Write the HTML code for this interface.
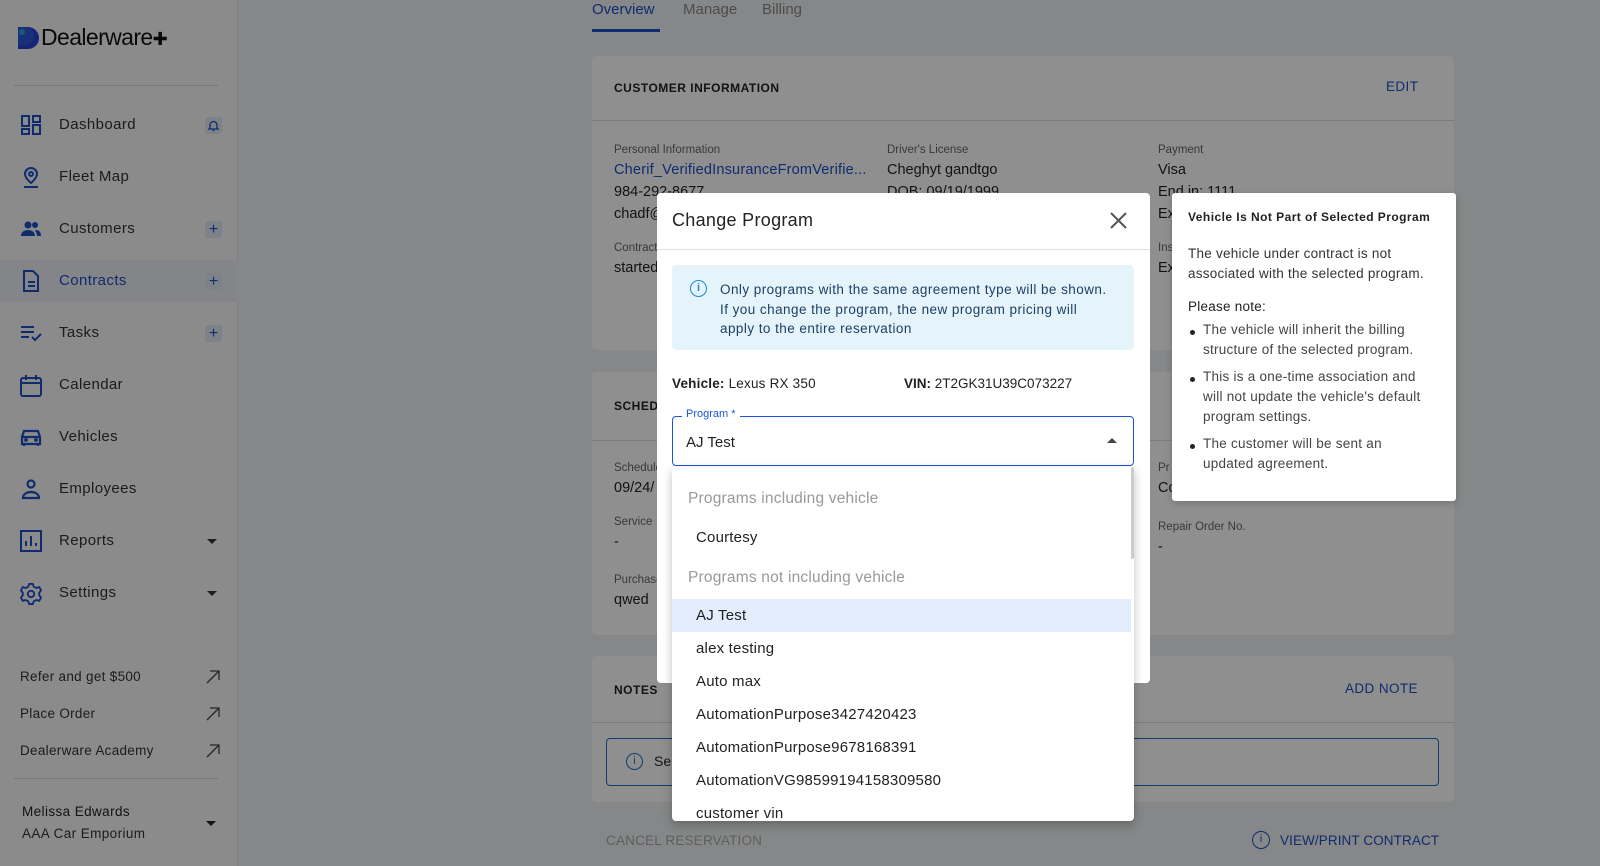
<!DOCTYPE html>
<html><head><meta charset="utf-8"><style>
*{box-sizing:border-box;margin:0;padding:0}
body{width:1600px;height:866px;overflow:hidden;position:relative;background:#eef0f2;font-family:"Liberation Sans",sans-serif;color:#222}
.a{position:absolute;white-space:nowrap}
#side{position:absolute;left:0;top:0;width:238px;height:866px;background:#f8f8f8;border-right:1px solid #e2e2e2}
.nav{position:absolute;left:0;width:238px;height:42px}
.nav .t{position:absolute;left:59px;top:12px;font-size:15px;letter-spacing:.4px;color:#333}
.nav svg{position:absolute;left:20px;top:10px}
.plus{position:absolute;left:205px;top:13px;width:17px;height:17px;background:#dfe6f3;border-radius:3px;color:#1a4fc4;font-size:16px;line-height:17px;text-align:center}
.card{position:absolute;left:592px;width:862px;background:#fff;border-radius:4px}
.lbl{font-size:11.5px;color:#666}
.val{font-size:14.5px;color:#222}
#ov{position:absolute;left:0;top:0;width:1600px;height:866px;background:rgba(0,0,0,.44)}
#modal{position:absolute;left:657px;top:193px;width:493px;height:490px;background:#fff;border-radius:4px}
#dd{position:absolute;left:672px;top:467px;width:462px;height:354px;background:#fff;border-radius:0 0 4px 4px;box-shadow:0 4px 10px rgba(0,0,0,.25);overflow:hidden}
.it{position:absolute;left:24px;font-size:15px;color:#222;letter-spacing:.2px}
#tip{position:absolute;left:1172px;top:193px;width:284px;height:308px;background:#fff;border-radius:3px;box-shadow:0 2px 8px rgba(0,0,0,.2)}
#tip .p{position:absolute;left:16px;font-size:13.5px;color:#333;letter-spacing:.25px}
#tip .b{position:absolute;left:31px;font-size:13.5px;color:#444;letter-spacing:.25px}
#tip .d{position:absolute;left:18px;width:5px;height:5px;border-radius:50%;background:#222}
</style></head><body>
<div id="side">
 <svg class="a" style="left:18px;top:27px" width="22" height="22" viewBox="0 0 22 22"><path d="M0 0h10a11 11 0 0 1 0 22H0z" fill="#2a3fd0"/><path d="M0 0h7a9 9 0 0 1 0 18H0z" fill="#2b63d8" opacity=".7"/><circle cx="4" cy="5" r="3" fill="#36b0d8" opacity=".8"/></svg>
 <div class="a" style="left:41px;top:24px;font-size:23px;letter-spacing:-.6px;color:#111">Dealerware<span style="font-size:18px">✚</span></div>
 <div class="a" style="left:14px;top:85px;width:204px;height:1px;background:#d6d6d6"></div>
 <div class="nav" style="top:104px"><svg width="22" height="22" viewBox="0 0 22 22" fill="none" stroke="#1a4fc4" stroke-width="2"><rect x="2" y="2" width="7" height="10"/><rect x="13" y="2" width="7" height="6"/><rect x="2" y="15" width="7" height="5"/><rect x="13" y="11" width="7" height="9"/></svg><div class="t">Dashboard</div><div class="plus"><svg style="position:absolute;left:3px;top:2px" width="11" height="13" viewBox="0 0 11 13" fill="none" stroke="#1a4fc4" stroke-width="1.3"><path d="M2 9V6a3.5 3.5 0 0 1 7 0v3l1 1H1zM4.5 11.5h2"/></svg></div></div>
 <div class="nav" style="top:156px"><svg width="22" height="22" viewBox="0 0 22 22" fill="none" stroke="#1a4fc4" stroke-width="2"><path d="M11 17s-6-5-6-9a6 6 0 0 1 12 0c0 4-6 9-6 9z"/><circle cx="11" cy="8" r="2"/><path d="M4 21h14"/></svg><div class="t">Fleet Map</div></div>
 <div class="nav" style="top:208px"><svg width="22" height="22" viewBox="0 0 22 22" fill="#1a4fc4"><circle cx="8" cy="7" r="3.5"/><circle cx="15" cy="7" r="3" /><path d="M1 18c0-4 3-6 7-6s7 2 7 6zM16 12c3 0 5 2 5 6h-4c0-2-1-4-2-5z"/></svg><div class="t">Customers</div><div class="plus">+</div></div>
 <div class="nav" style="top:260px;background:#eceef3"><svg width="22" height="22" viewBox="0 0 22 22" fill="none" stroke="#1a4fc4" stroke-width="2"><path d="M4 1h9l5 5v15H4z"/><path d="M8 12h7M8 16h7"/></svg><div class="t" style="color:#1a4fc4">Contracts</div><div class="plus">+</div></div>
 <div class="nav" style="top:312px"><svg width="22" height="22" viewBox="0 0 22 22" fill="none" stroke="#1a4fc4" stroke-width="2"><path d="M1 5h13M1 10h13M1 15h8M12 15l3 3 6-6"/></svg><div class="t">Tasks</div><div class="plus">+</div></div>
 <div class="nav" style="top:364px"><svg width="22" height="24" viewBox="0 0 22 24" fill="none" stroke="#1a4fc4" stroke-width="2"><rect x="1" y="4" width="20" height="18" rx="2"/><path d="M1 9h20M6 1v5M16 1v5"/></svg><div class="t">Calendar</div></div>
 <div class="nav" style="top:416px"><svg width="22" height="22" viewBox="0 0 22 22" fill="none" stroke="#1a4fc4" stroke-width="2.2"><path d="M2 11l2-6h14l2 6v7H2z"/><path d="M2 11h18M4 18v2M18 18v2"/><circle cx="6" cy="14" r=".8"/><circle cx="16" cy="14" r=".8"/></svg><div class="t">Vehicles</div></div>
 <div class="nav" style="top:468px"><svg width="22" height="22" viewBox="0 0 22 22" fill="none" stroke="#1a4fc4" stroke-width="2.2"><circle cx="11" cy="6" r="3.5"/><path d="M3 20c0-4 4-6 8-6s8 2 8 6z"/></svg><div class="t">Employees</div></div>
 <div class="nav" style="top:520px"><svg width="22" height="22" viewBox="0 0 22 22" fill="none" stroke="#1a4fc4" stroke-width="2"><rect x="1" y="1" width="20" height="20"/><path d="M6 16v-5M11 16V6M16 16v-3"/></svg><div class="t">Reports</div><div class="a" style="left:207px;top:19px;border:5px solid transparent;border-top-color:#333;border-bottom:0"></div></div>
 <div class="nav" style="top:572px"><svg width="22" height="24" viewBox="0 0 24 24" fill="none" stroke="#1a4fc4" stroke-width="2"><path d="M10 1h4l1 3 3 1.5 3-1 2 3.5-2 2.5v3l2 2.5-2 3.5-3-1L15 20l-1 3h-4l-1-3-3-1.5-3 1-2-3.5 2-2.5v-3L1 8l2-3.5 3 1L9 4z"/><circle cx="12" cy="12" r="3.5"/></svg><div class="t">Settings</div><div class="a" style="left:207px;top:19px;border:5px solid transparent;border-top-color:#333;border-bottom:0"></div></div>
 <div class="a" style="left:20px;top:669px;font-size:13.5px;color:#333;letter-spacing:.3px">Refer and get $500</div>
 <div class="a" style="left:20px;top:706px;font-size:13.5px;color:#333;letter-spacing:.3px">Place Order</div>
 <div class="a" style="left:20px;top:743px;font-size:13.5px;color:#333;letter-spacing:.3px">Dealerware Academy</div>
 <svg class="a" style="left:206px;top:670px" width="14" height="90" viewBox="0 0 14 90" fill="none" stroke="#444" stroke-width="1.3"><path d="M1 13L13 1M4 1h9v9M1 50L13 38M4 38h9v9M1 87L13 75M4 75h9v9"/></svg>
 <div class="a" style="left:14px;top:778px;width:204px;height:1px;background:#d6d6d6"></div>
 <div class="a" style="left:22px;top:804px;font-size:13.5px;color:#222;letter-spacing:.4px">Melissa Edwards</div>
 <div class="a" style="left:22px;top:826px;font-size:13.5px;color:#333;letter-spacing:.4px">AAA Car Emporium</div>
 <div class="a" style="left:206px;top:821px;border:5px solid transparent;border-top-color:#222;border-bottom:0"></div>
</div>

<div class="a" style="left:592px;top:1px;font-size:15px;color:#1a4fc4">Overview</div>
<div class="a" style="left:683px;top:1px;font-size:15px;color:#888">Manage</div>
<div class="a" style="left:762px;top:1px;font-size:15px;color:#888">Billing</div>
<div class="a" style="left:592px;top:29px;width:68px;height:3px;background:#1a4fc4"></div>

<div class="card" style="top:56px;height:294px">
 <div class="a" style="left:22px;top:25px;font-size:12px;font-weight:bold;letter-spacing:.5px">CUSTOMER INFORMATION</div>
 <div class="a" style="left:794px;top:23px;font-size:13.5px;color:#1a4fc4;letter-spacing:.4px">EDIT</div>
 <div class="a" style="left:0;top:64px;width:862px;height:1px;background:#ddd"></div>
 <div class="a lbl" style="left:22px;top:88px">Personal Information</div>
 <div class="a val" style="left:22px;top:106px;color:#1a4fc4;letter-spacing:.2px">Cherif_VerifiedInsuranceFromVerifie...</div>
 <div class="a val" style="left:22px;top:128px">984-292-8677</div>
 <div class="a val" style="left:22px;top:150px">chadf@</div>
 <div class="a lbl" style="left:22px;top:186px">Contract</div>
 <div class="a val" style="left:22px;top:204px">started</div>
 <div class="a lbl" style="left:295px;top:88px">Driver's License</div>
 <div class="a val" style="left:295px;top:106px">Cheghyt gandtgo</div>
 <div class="a val" style="left:295px;top:128px">DOB: 09/19/1999</div>
 <div class="a lbl" style="left:566px;top:88px">Payment</div>
 <div class="a val" style="left:566px;top:106px">Visa</div>
 <div class="a val" style="left:566px;top:128px">End in: 1111</div>
 <div class="a val" style="left:566px;top:150px">Exp</div>
 <div class="a lbl" style="left:566px;top:186px">Ins</div>
 <div class="a val" style="left:566px;top:204px">Exp</div>
</div>
<div class="card" style="top:372px;height:263px">
 <div class="a" style="left:22px;top:27px;font-size:12px;font-weight:bold;letter-spacing:.5px">SCHEDULE</div>
 <div class="a" style="left:0;top:68px;width:862px;height:1px;background:#ddd"></div>
 <div class="a lbl" style="left:22px;top:90px">Schedule</div>
 <div class="a val" style="left:22px;top:108px">09/24/</div>
 <div class="a lbl" style="left:22px;top:144px">Service</div>
 <div class="a val" style="left:22px;top:162px">-</div>
 <div class="a lbl" style="left:22px;top:202px">Purchase</div>
 <div class="a val" style="left:22px;top:220px">qwed</div>
 <div class="a lbl" style="left:566px;top:90px">Pr</div>
 <div class="a val" style="left:566px;top:108px">Co</div>
 <div class="a lbl" style="left:566px;top:149px">Repair Order No.</div>
 <div class="a val" style="left:566px;top:167px">-</div>
</div>
<div class="card" style="top:656px;height:146px">
 <div class="a" style="left:22px;top:27px;font-size:12px;font-weight:bold;letter-spacing:.5px">NOTES</div>
 <div class="a" style="left:753px;top:25px;font-size:13.5px;color:#1a4fc4;letter-spacing:.4px">ADD NOTE</div>
 <div class="a" style="left:0;top:66px;width:862px;height:1px;background:#ddd"></div>
 <div class="a" style="left:14px;top:82px;width:833px;height:48px;border:1px solid #1a6fc4;border-radius:4px"></div>
 <div class="a" style="left:34px;top:97px;width:17px;height:17px;border:1.5px solid #1a6fc4;border-radius:50%;color:#1a6fc4;font-size:11px;text-align:center;line-height:14px">i</div>
 <div class="a" style="left:62px;top:97px;font-size:14px">Select</div>
</div>
<div class="a" style="left:606px;top:833px;font-size:13.5px;color:#aaa;letter-spacing:.2px">CANCEL RESERVATION</div>
<div class="a" style="left:1252px;top:831px;width:18px;height:18px;border:1.5px solid #1a4fc4;border-radius:50%;color:#1a4fc4;font-size:11px;text-align:center;line-height:15px">i</div>
<div class="a" style="left:1280px;top:833px;font-size:13.5px;color:#1a4fc4;letter-spacing:.1px">VIEW/PRINT CONTRACT</div>

<div id="ov"></div>

<div id="modal">
 <div class="a" style="left:15px;top:17px;font-size:18px;color:#222;letter-spacing:.3px">Change Program</div>
 <svg class="a" style="left:453px;top:19px" width="17" height="17" viewBox="0 0 17 17" stroke="#555" stroke-width="2"><path d="M1 1l15 15M16 1L1 16"/></svg>
 <div class="a" style="left:0;top:56px;width:493px;height:1px;background:#e0e0e0"></div>
 <div class="a" style="left:15px;top:72px;width:462px;height:85px;background:#e5f4fb;border-radius:4px"></div>
 <div class="a" style="left:33px;top:87px;width:17px;height:17px;border:1.5px solid #1a8ad4;border-radius:50%;color:#1a8ad4;font-size:11px;text-align:center;line-height:14px;font-weight:bold">i</div>
 <div class="a" style="left:63px;top:87px;font-size:13.5px;line-height:19.6px;color:#1d3f66;letter-spacing:.45px">Only programs with the same agreement type will be shown.<br>If you change the program, the new program pricing will<br>apply to the entire reservation</div>
 <div class="a" style="left:15px;top:183px;font-size:13.5px;color:#222;letter-spacing:.2px"><b>Vehicle:</b> Lexus RX 350</div>
 <div class="a" style="left:247px;top:183px;font-size:13.5px;color:#222"><b>VIN:</b> 2T2GK31U39C073227</div>
 <div class="a" style="left:15px;top:223px;width:462px;height:50px;border:1.6px solid #1a56db;border-radius:4px"></div>
 <div class="a" style="left:25px;top:215px;padding:0 4px;background:#fff;font-size:11px;color:#1a56db">Program *</div>
 <div class="a" style="left:29px;top:241px;font-size:15px;color:#222">AJ Test</div>
 <div class="a" style="left:450px;top:245px;border:5px solid transparent;border-bottom-color:#444;border-top:0"></div>
</div>

<div id="dd">
 <div class="a" style="left:459px;top:0;width:3px;height:92px;background:#ccc;border-radius:2px"></div>
 <div class="it" style="left:16px;top:23px;color:#999;font-size:15.5px">Programs including vehicle</div>
 <div class="it" style="top:62px">Courtesy</div>
 <div class="it" style="left:16px;top:102px;color:#999;font-size:15.5px">Programs not including vehicle</div>
 <div class="a" style="left:0;top:132px;width:459px;height:33px;background:#e3edfb"></div>
 <div class="it" style="top:140px">AJ Test</div>
 <div class="it" style="top:173px">alex testing</div>
 <div class="it" style="top:206px">Auto max</div>
 <div class="it" style="top:239px">AutomationPurpose3427420423</div>
 <div class="it" style="top:272px">AutomationPurpose9678168391</div>
 <div class="it" style="top:305px">AutomationVG98599194158309580</div>
 <div class="it" style="top:338px">customer vin</div>
</div>

<div id="tip">
 <div class="a" style="left:16px;top:17px;font-size:12px;font-weight:bold;color:#222;letter-spacing:.45px">Vehicle Is Not Part of Selected Program</div>
 <div class="a p" style="top:51px;line-height:20px">The vehicle under contract is not<br>associated with the selected program.</div>
 <div class="a p" style="top:106px;color:#222">Please note:</div>
 <div class="d a" style="top:137px"></div>
 <div class="a b" style="top:127px;line-height:20px">The vehicle will inherit the billing<br>structure of the selected program.</div>
 <div class="d a" style="top:184px"></div>
 <div class="a b" style="top:174px;line-height:20px">This is a one-time association and<br>will not update the vehicle's default<br>program settings.</div>
 <div class="d a" style="top:251px"></div>
 <div class="a b" style="top:241px;line-height:20px">The customer will be sent an<br>updated agreement.</div>
</div>
</body></html>
